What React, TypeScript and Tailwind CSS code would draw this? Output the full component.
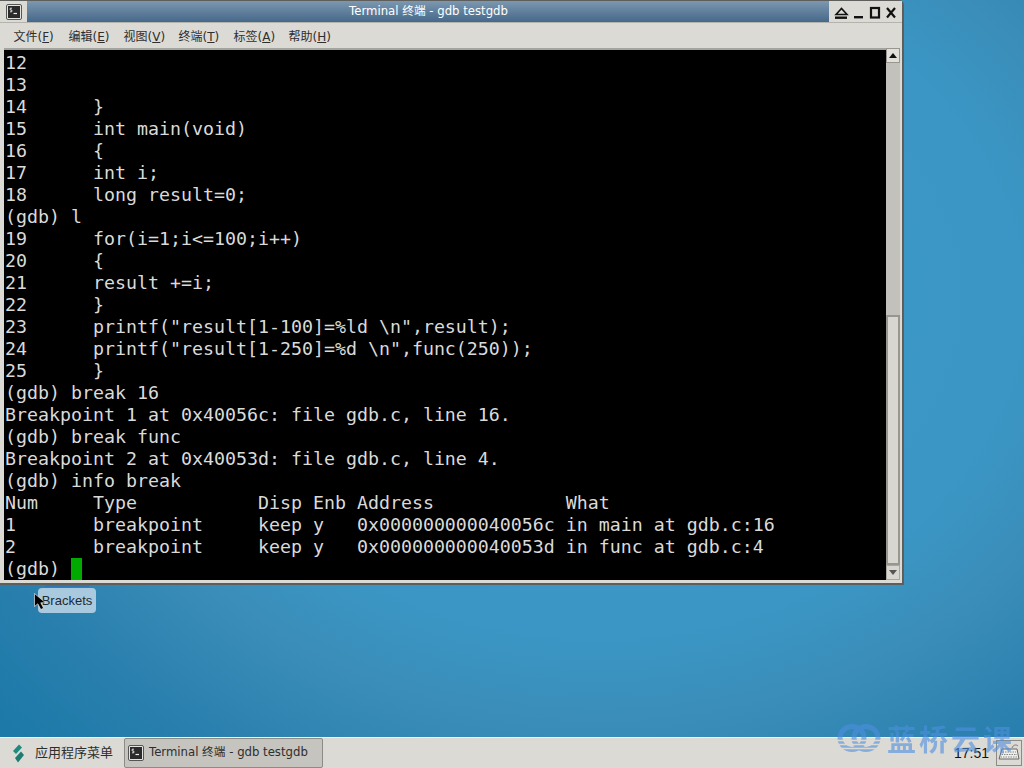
import React from "react";

const lines = [
  "12",
  "13",
  "14      }",
  "15      int main(void)",
  "16      {",
  "17      int i;",
  "18      long result=0;",
  "(gdb) l",
  "19      for(i=1;i<=100;i++)",
  "20      {",
  "21      result +=i;",
  "22      }",
  '23      printf("result[1-100]=%ld \\n",result);',
  '24      printf("result[1-250]=%d \\n",func(250));',
  "25      }",
  "(gdb) break 16",
  "Breakpoint 1 at 0x40056c: file gdb.c, line 16.",
  "(gdb) break func",
  "Breakpoint 2 at 0x40053d: file gdb.c, line 4.",
  "(gdb) info break",
  "Num     Type           Disp Enb Address            What",
  "1       breakpoint     keep y   0x000000000040056c in main at gdb.c:16",
  "2       breakpoint     keep y   0x000000000040053d in func at gdb.c:4",
];

const menus: [string, string][] = [
  ["文件", "F"],
  ["编辑", "E"],
  ["视图", "V"],
  ["终端", "T"],
  ["标签", "A"],
  ["帮助", "H"],
];

const uiFont = "font-['DejaVu_Sans','Noto_Sans_CJK_SC',sans-serif]";

function TerminalIcon({ size }: { size: number }) {
  return (
    <svg width={size} height={size} viewBox="0 0 16 16" className="shrink-0">
      <rect x="0.5" y="0.5" width="15" height="15" rx="1.5" fill="#e4e4e0" stroke="#555" />
      <rect x="2" y="2" width="12" height="12" fill="#2b2b2b" />
      <path d="M6 4.2H4.2V6H5.8V7.8H4" fill="none" stroke="#eee" strokeWidth="0.9" />
      <path d="M7.5 9.5H11" stroke="#eee" strokeWidth="1.2" />
    </svg>
  );
}

function WindowButtons() {
  return (
    <div className="flex h-[22px] w-[73px] shrink-0 items-center justify-end pr-[6px]">
      <svg width="66" height="16" viewBox="0 0 66 16">
        <path d="M6 10.5 11.5 4.5 17 10.5Z" fill="none" stroke="#111" strokeWidth="1.6" />
        <rect x="5" y="12.5" width="12" height="2.4" fill="#111" />
        <rect x="24" y="12" width="9" height="2.4" fill="#111" />
        <rect x="41" y="4" width="8" height="9.5" fill="none" stroke="#111" strokeWidth="2.2" />
        <path d="M57 4 65 13.5M65 4 57 13.5" stroke="#111" strokeWidth="2.2" />
      </svg>
    </div>
  );
}

function Scrollbar() {
  return (
    <div className="flex w-[14px] shrink-0 flex-col bg-[#c3c1bb]">
      <div className="flex h-[15px] items-center justify-center border border-[#98968f] bg-[#e2e0db]">
        <svg width="8" height="5" viewBox="0 0 8 5">
          <path d="M0 5 4 0 8 5Z" fill="#111" />
        </svg>
      </div>
      <div className="mt-auto h-[250px] border-2 border-[#98968f] bg-[#d8d6d0]" />
      <div className="flex h-[15px] items-center justify-center border border-[#a9a7a0] bg-[#d8d6d0]">
        <svg width="8" height="5" viewBox="0 0 8 5">
          <path d="M0 0 4 5 8 0Z" fill="#555" />
        </svg>
      </div>
    </div>
  );
}

function TerminalWindow() {
  return (
    <div className={`absolute left-0 top-0 flex h-[585px] w-[904px] flex-col rounded-tr-[5px] border-t border-r-2 border-b-2 border-[#5e5e5c] bg-[#dcdad5] ${uiFont}`}>
      <div className="flex h-[22px] shrink-0 items-stretch border-b border-[#b5b3ad] bg-[#dcdad5]">
        <div className="flex w-[27px] shrink-0 items-center justify-center">
          <TerminalIcon size={16} />
        </div>
        <div className="flex flex-1 items-center justify-center bg-gradient-to-b from-[#7c98b0] to-[#46688a] pl-px text-[11.7px] text-white">
          Terminal 终端 - gdb testgdb
        </div>
        <WindowButtons />
      </div>
      <div className="flex h-[25px] shrink-0 items-center gap-[14px] pl-[13.5px] pt-[3px] text-[12px] text-[#2e2e2e]">
        {menus.map(([label, key]) => (
          <span key={key} className="w-[41px] whitespace-nowrap">
            {label}(<span className="underline">{key}</span>)
          </span>
        ))}
      </div>
      <div className="flex min-h-0 flex-1 pl-[4px] pr-[2px] pb-[3px]">
        <div className="flex-1 overflow-hidden border-t-2 border-[#a5a39d] bg-black pl-px pt-[2px] font-['DejaVu_Sans_Mono',monospace] text-[18.27px] leading-[22px] text-[#dadada]">
          {lines.map((line, i) => (
            <div key={i} className="h-[22px] whitespace-pre">
              {line}
            </div>
          ))}
          <div className="flex h-[22px] whitespace-pre">
            {"(gdb) "}
            <span className="h-[22px] w-[11px] bg-[#00aa00]" />
          </div>
        </div>
        <Scrollbar />
      </div>
    </div>
  );
}

function Desktop() {
  return (
    <div className="relative flex-1 bg-[radial-gradient(700px_560px_at_600px_300px,#3d9ac9_0%,#3b96c5_60%,#3a8db8_76%,#2a80ae_95%,#1c79a8_115%)]">
      <TerminalWindow />
      <div className="absolute left-[45px] top-[585px] h-[2px] w-[45px] rounded-b bg-[#2f6fb5]/60" />
      <div className="absolute left-[38px] top-[588px] flex h-[25px] w-[58px] items-center justify-center rounded-[4px] bg-[#a9c9de] font-['Liberation_Sans',sans-serif] text-[13px] text-[#1f2a33]">
        Brackets
      </div>
      <svg width="13" height="18" viewBox="0 0 13 18" className="absolute left-[34px] top-[593px]">
        <path d="M0.5 0.5V13.5L3.8 10.8 6.8 16.5 9.6 15.2 6.8 9.8H11.5Z" fill="#000" stroke="#fff" strokeWidth="0.6" />
      </svg>
    </div>
  );
}

function Watermark() {
  return (
    <div className="pointer-events-none absolute left-[837px] top-[723px] flex items-center gap-[6px] opacity-60">
      <svg width="44" height="30" viewBox="0 0 44 30">
        <mask id="stripes">
          <rect width="44" height="30" fill="#fff" />
          <path d="M0 17.5H44M0 21.5H44M0 25.5H44" stroke="#000" strokeWidth="1.4" />
        </mask>
        <g fill="none" stroke="#4d8fe0" mask="url(#stripes)">
          <ellipse cx="15" cy="15" rx="12" ry="11.5" strokeWidth="5" />
          <ellipse cx="29" cy="15" rx="12" ry="11.5" strokeWidth="5" />
        </g>
      </svg>
      <span className="font-['Noto_Sans_CJK_SC',sans-serif] text-[29px] font-bold leading-[14px] tracking-[3px] text-[#4d8fe0]">
        蓝桥云课
      </span>
    </div>
  );
}

function Taskbar() {
  return (
    <div className={`flex h-[31px] shrink-0 items-center border-t border-[#f2f1ee] bg-[#dcdad5] text-[13px] text-[#2e2e2e] ${uiFont}`}>
      <div className="flex w-[124px] shrink-0 items-center pl-[12px]">
        <svg width="13" height="19" viewBox="0 0 13 19" className="shrink-0">
          <path d="M7 0.5 1 7 4 10 10 3.5Z" fill="#1f8a80" />
          <path d="M9 7.5 3 14 6 18.5 12 11Z" fill="#1f7a72" />
        </svg>
        <span className="ml-[10px] whitespace-nowrap">应用程序菜单</span>
      </div>
      <div className="flex h-[30px] w-[199px] shrink-0 items-center gap-[5px] self-end rounded-[2px] border border-[#8d8b85] bg-[#c6c4be] pl-[3px] text-[11.7px]">
        <TerminalIcon size={16} />
        <span>Terminal 终端 - gdb testgdb</span>
      </div>
      <div className="ml-auto flex items-center gap-[7px] pr-[2px]">
        <span className="font-['Liberation_Sans',sans-serif] text-[14px] text-[#111]">17:51</span>
        <div className="flex h-[26px] w-[26px] items-center justify-center border border-[#8d8b85]">
          <svg width="22" height="20" viewBox="0 0 22 20">
            <path d="M14 5C15 2 18 1 20 3" fill="none" stroke="#777" />
            <path d="M4 6H19L21 16H1Z" fill="#eeeeea" stroke="#666" />
            <path d="M4.5 9H18M3.5 11.5H19M2.5 14H20" stroke="#888" strokeDasharray="1.5 1" />
          </svg>
        </div>
      </div>
    </div>
  );
}

export default function App() {
  return (
    <div className="relative flex h-[768px] w-[1024px] flex-col overflow-hidden">
      <Desktop />
      <Taskbar />
      <Watermark />
    </div>
  );
}
